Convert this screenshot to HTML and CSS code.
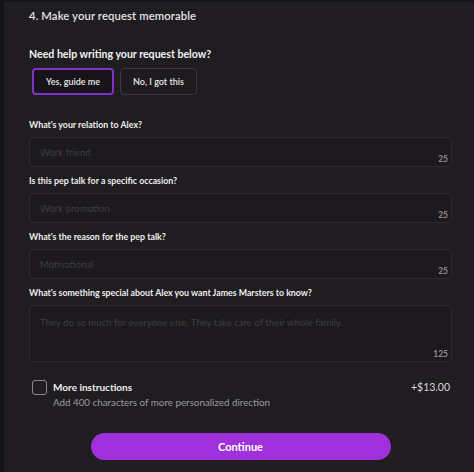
FILE: index.html
```html
<!DOCTYPE html>
<html>
<head>
<meta charset="utf-8">
<link rel="stylesheet" href="styles.css">
</head>
<body>
<div class="frame">
  <div class="content">
    <h2 class="title">4. Make your request memorable</h2>
    <p class="question">Need help writing your request below?</p>
    <div class="choices">
      <button class="choice selected">Yes, guide me</button>
      <button class="choice">No, I got this</button>
    </div>

    <div class="fields">
      <div class="field">
        <label class="label">What's your relation to Alex?</label>
        <div class="input">
          <span class="placeholder">Work friend</span>
          <span class="count">25</span>
        </div>
      </div>
      <div class="field">
        <label class="label">Is this pep talk for a specific occasion?</label>
        <div class="input">
          <span class="placeholder">Work promotion</span>
          <span class="count">25</span>
        </div>
      </div>
      <div class="field">
        <label class="label">What's the reason for the pep talk?</label>
        <div class="input">
          <span class="placeholder">Motivational</span>
          <span class="count">25</span>
        </div>
      </div>
      <div class="field">
        <label class="label">What's something special about Alex you want James Marsters to know?</label>
        <div class="input textarea">
          <span class="placeholder">They do so much for everyone else. They take care of their whole family.</span>
          <span class="count">125</span>
        </div>
      </div>
    </div>

    <div class="extra">
      <span class="checkbox"></span>
      <div class="extra-text">
        <div class="extra-title">More instructions</div>
        <div class="extra-desc">Add 400 characters of more personalized direction</div>
      </div>
      <div class="price">+$13.00</div>
    </div>

    <div class="actions">
      <button class="continue">Continue</button>
    </div>
  </div>
</div>
</body>
</html>
```
FILE: styles.css
```css
* { box-sizing: border-box; }
html, body {
  margin: 0;
  padding: 0;
  background: #1f1d20;
}
body {
  font-family: Lato, "Noto Sans", sans-serif;
  color: #e6e6e6;
  width: 474px;
  height: 472px;
  overflow: hidden;
}
.frame {
  height: 472px;
  border-left: 4px solid #141315;
  border-top: 2px solid #161517;
}
.content {
  padding: 6px 22px 0 25px;
}
.title {
  margin: 0;
  font-size: 11.3px;
  line-height: 16px;
  font-weight: 600;
  color: #e2e2e2;
  letter-spacing: 0.1px;
}
.question {
  margin: 23px 0 0;
  font-size: 10.6px;
  line-height: 14px;
  font-weight: 700;
  color: #f2f2f2;
}
.choices {
  display: flex;
  gap: 6px;
  margin-top: 7px;
  padding-left: 3px;
}
.choice {
  height: 27px;
  padding: 0 12px;
  border-radius: 4px;
  border: 1px solid #39373b;
  background: #1d1b1e;
  color: #e8e8e8;
  font-family: inherit;
  font-size: 9px;
  font-weight: 600;
}
.choice.selected {
  border: 2px solid #7d33c9;
  background: #161418;
  padding: 0 12px;
}
.fields {
  display: flex;
  flex-direction: column;
  gap: 8px;
  margin-top: 24px;
}
.field {
  display: flex;
  flex-direction: column;
  gap: 6px;
}
.label {
  font-size: 8.8px;
  line-height: 12px;
  font-weight: 700;
  color: #ededed;
}
.input {
  position: relative;
  height: 30px;
  border: 1px solid #2d2b2f;
  border-radius: 4px;
  background: #1c1a1d;
  display: flex;
  align-items: center;
  padding: 0 10px;
}
.input.textarea {
  height: 57px;
  align-items: flex-start;
  padding-top: 11px;
}
.placeholder {
  font-size: 9.6px;
  color: #3f3d41;
}
.count {
  position: absolute;
  right: 3px;
  bottom: 2px;
  font-size: 8.5px;
  font-weight: 700;
  color: #8c8a8e;
}
.extra {
  display: flex;
  align-items: flex-start;
  margin-top: 18px;
  padding-left: 3px;
}
.checkbox {
  width: 15px;
  height: 15px;
  border: 1.5px solid #8a888c;
  border-radius: 3px;
  flex: none;
}
.extra-text {
  margin-left: 6px;
  flex: 1;
}
.extra-title {
  font-size: 10px;
  line-height: 14px;
  font-weight: 700;
  color: #ededed;
}
.extra-desc {
  margin-top: 1px;
  font-size: 9.8px;
  line-height: 14px;
  color: #9c9a9e;
}
.price {
  font-size: 10.5px;
  line-height: 14px;
  color: #d8d8d8;
  padding-right: 2px;
}
.actions {
  display: flex;
  justify-content: center;
  margin-top: 24px;
}
.continue {
  width: 300px;
  height: 27px;
  border: none;
  border-radius: 14px;
  background: #9e31dc;
  color: #ffffff;
  font-family: inherit;
  font-size: 11px;
  font-weight: 700;
}
```
